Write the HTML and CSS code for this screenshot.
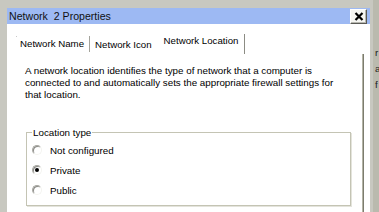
FILE: index.html
```html
<!DOCTYPE html>
<html>
<head>
<meta charset="utf-8">
<link rel="stylesheet" href="styles.css">
</head>
<body>
<div class="screen">
  <div class="dialog">
    <div class="titlebar">
      <span class="title">Network&nbsp; 2 Properties</span>
      <div class="close">
        <svg width="10" height="9" viewBox="0 0 10 9"><path d="M1.5 1 L8.5 8 M8.5 1 L1.5 8" stroke="#000" stroke-width="2.2" fill="none"/></svg>
      </div>
    </div>
    <div class="client">
      <div class="tabs">
        <div class="tab tab-first">Network Name</div>
        <div class="tab tab-plain">Network Icon</div>
        <div class="tab tab-active">Network Location</div>
      </div>
      <div class="page">
        <p class="desc">A network location identifies the type of network that a computer is<br>connected to and automatically sets the appropriate firewall settings for<br>that location.</p>
        <fieldset class="group">
          <legend>Location type</legend>
          <div class="radio"><span class="rb"></span>Not configured</div>
          <div class="radio"><span class="rb rb-on"></span>Private</div>
          <div class="radio"><span class="rb"></span>Public</div>
        </fieldset>
      </div>
    </div>
  </div>
  <div class="behind">
    <span class="frag">r</span>
    <span class="frag">a</span>
    <span class="frag">f</span>
  </div>
</div>
</body>
</html>
```
FILE: styles.css
```css
html, body {
  margin: 0;
  padding: 0;
}
body {
  width: 379px;
  height: 212px;
  overflow: hidden;
  background: #c4c4bc;
  font-family: "Liberation Sans", Arial, sans-serif;
  font-size: 9.8px;
  color: #000;
}
.screen {
  display: flex;
  height: 212px;
}
.dialog {
  width: 373px;
  box-sizing: border-box;
  padding: 8px 3px 0 7px;
  background: #c8c8c0;
  display: flex;
  flex-direction: column;
}
.titlebar {
  height: 16px;
  flex: none;
  background: #9db9f3;
  display: flex;
  justify-content: space-between;
  align-items: center;
  padding-left: 2px;
}
.title {
  font-size: 10.6px;
  line-height: 16px;
  color: #111;
}
.close {
  align-self: flex-end;
  width: 17px;
  height: 15px;
  box-sizing: border-box;
  margin-right: 3px;
  background: #f6f6f2;
  border: 1px solid;
  border-color: #ffffff #5a5a55 #5a5a55 #ffffff;
  box-shadow: inset -1px -1px 0 #b8b8b0;
  display: flex;
  align-items: center;
  justify-content: center;
}
.close svg {
  display: block;
}
.client {
  flex: 1;
  background: #fff;
  display: flex;
  flex-direction: column;
  padding: 0 6px 0 7px;
  min-height: 0;
}
.tabs {
  height: 30px;
  flex: none;
  display: flex;
  align-items: flex-end;
  padding-left: 2px;
  font-size: 9.7px;
}
.tab {
  line-height: 13px;
  padding-top: 1px;
  height: 16px;
  white-space: nowrap;
}
.tab-first {
  padding-left: 4px;
  padding-right: 5px;
  height: 15px;
  margin-bottom: 2px;
  border-right: 1px solid #a4a49c;
  position: relative;
}
.tab-first::before {
  content: "";
  position: absolute;
  left: 0;
  top: 0;
  width: 1px;
  height: 1px;
  background: #c8c8c8;
}
.tab-plain {
  padding-left: 5px;
  padding-right: 6px;
}
.tab-active {
  padding-left: 6px;
  padding-right: 6px;
  height: 20px;
  padding-top: 0;
  border-right: 1px solid #8c8c84;
}
.page {
  flex: 1;
  border-right: 1px solid #7c7c6e;
  box-shadow: inset -1px 0 0 #b4b4a6;
  padding: 11px 12px 0 11px;
  min-height: 0;
}
.desc {
  margin: 0;
  line-height: 12px;
  white-space: nowrap;
}
.group {
  margin: 26px 0 0 1px;
  padding: 2px 0 5px 0;
  border: 1px solid #c4c4b4;
  box-shadow: 1px 1px 0 #e4e4dc;
}
.group legend {
  margin-left: 5px;
  padding: 0 1px;
  line-height: 11px;
}
.radio {
  height: 20px;
  display: flex;
  align-items: center;
  padding-left: 5px;
}
.rb {
  width: 10px;
  height: 10px;
  box-sizing: border-box;
  border-radius: 50%;
  margin-right: 8px;
  background: #fff;
  border: 1px solid;
  border-color: #a8a8a2 #f4f4f0 #f4f4f0 #a8a8a2;
  box-shadow: inset 1px 1px 0 #8a8a86;
  position: relative;
}
.rb-on::after {
  content: "";
  position: absolute;
  left: 2px;
  top: 2px;
  width: 4px;
  height: 4px;
  border-radius: 50%;
  background: #000;
}
.behind {
  flex: 1;
  background: #babaae;
  display: flex;
  flex-direction: column;
  padding-top: 45px;
  overflow: hidden;
  line-height: 16px;
  padding-left: 2px;
  color: #222;
}
.frag {
  display: block;
}
```
